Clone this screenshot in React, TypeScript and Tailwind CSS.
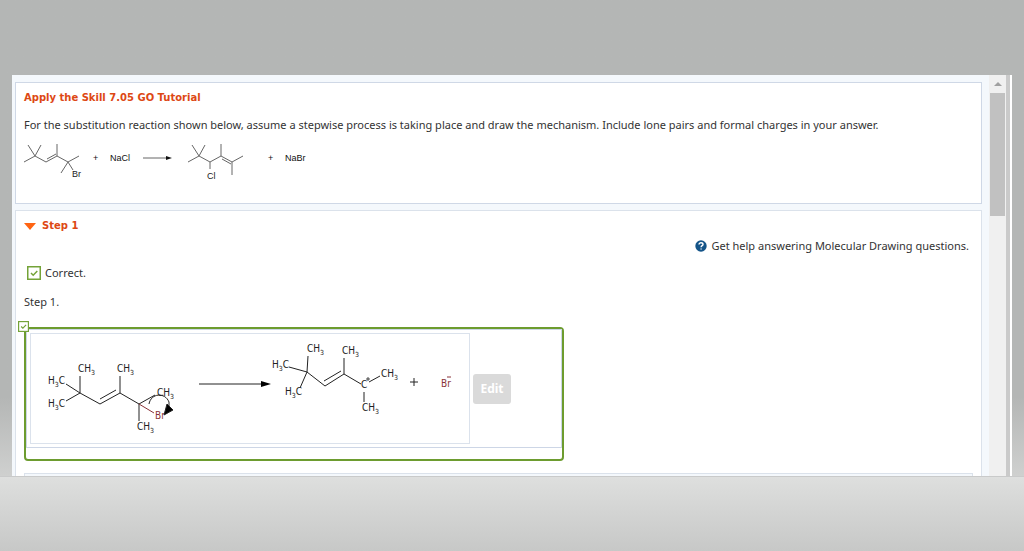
import React from 'react';

type AtomProps = { x: number; y: number; flip?: boolean };

function Methyl({ x, y, flip = false }: AtomProps) {
  return (
    <text x={x} y={y} stroke="none" fill="#222">
      {flip ? 'H' : 'CH'}
      <tspan dy="3" fontSize="7">3</tspan>
      {flip && <tspan dy="-3">C</tspan>}
    </text>
  );
}

function CheckBadge({ className }: { className: string }) {
  return (
    <svg viewBox="0 0 14 14" className={className} role="img" aria-label="Correct">
      <rect x="0.75" y="0.75" width="12.5" height="12.5" fill="#fff" stroke="#74a338" strokeWidth="1.5" />
      <path d="M4 7l2.2 2.2L10.3 5" fill="none" stroke="#74a338" strokeWidth="1.5" />
    </svg>
  );
}

function QuestionReaction() {
  return (
    <svg
      viewBox="0 0 300 44"
      className="block w-[300px] h-[44px] font-['Liberation_Sans',Arial,sans-serif]"
      fill="none"
      stroke="#666"
      strokeWidth="1"
      fontSize="9"
      role="img"
      aria-label="Alkyl bromide and sodium chloride react"
    >
      <path d="M0 19L11 13L22 19L33 13L44 19L55 13 M4 2L11 13L17 2 M33 13V1 M23 16L32 11 M44 19L37 30 M44 19L49 27" />
      <text x="48" y="34" stroke="none" fill="#222">Br</text>
      <text x="69" y="18" stroke="none" fill="#111">+</text>
      <text x="86" y="18" stroke="none" fill="#111">NaCl</text>
      <path d="M119 15H144" />
      <path d="M142 13L148 15L142 17Z" fill="#111" stroke="none" />
      <path d="M164 19L175 13L186 19L197 13L208 19L219 13 M168 2L175 13L181 2 M186 19V26 M197 13V1 M198 16L207 21 M208 19V32" />
      <text x="183" y="36" stroke="none" fill="#222">Cl</text>
      <text x="244" y="18" stroke="none" fill="#111">+</text>
      <text x="261" y="18" stroke="none" fill="#111">NaBr</text>
    </svg>
  );
}

function MechanismDrawing() {
  return (
    <svg
      viewBox="0 0 438 109"
      className="block w-[438px] h-[109px] font-['DejaVu_Sans_Condensed','DejaVu_Sans',sans-serif]"
      fill="none"
      stroke="#222"
      fontSize="10"
      role="img"
      aria-label="Mechanism drawing"
    >
      <path d="M35 50L49 59L35 67 M49 59V42 M49 59L69 70L89 59L108 70L124 61 M69 65L85 56 M89 59V42 M108 70V87" />
      <path d="M108 70L123 79" stroke="#8a3338" />
      <Methyl x={47} y={38} />
      <Methyl x={86} y={38} />
      <Methyl x={17} y={50} flip />
      <Methyl x={17} y={73} flip />
      <Methyl x={126} y={62} />
      <Methyl x={106} y={96} />
      <text x="124" y="85" stroke="none" fill="#8a3338">Br</text>
      <path d="M118 70C120 59 134 58 138 68Q139 72 136 76" />
      <path d="M136 70L142 76L133 81Z" fill="#000" />

      <path d="M168 50H233" />
      <path d="M230 47L240 50L230 53Z" fill="#000" stroke="none" />

      <path d="M258 33L276 38L277 22 M276 38L269 54 M276 38L294 52L313 40L330 50 M293 47L310 37 M313 40V24 M338 48L349 42 M333 58V68" />
      <Methyl x={276} y={18} />
      <Methyl x={311} y={20} />
      <Methyl x={241} y={34} flip />
      <Methyl x={254} y={61} flip />
      <Methyl x={350} y={43} />
      <Methyl x={331} y={77} />
      <text x="330" y="54" stroke="none" fill="#222">C</text>
      <path d="M335 45H339 M337 43V47" strokeWidth="0.8" />
      <path d="M379 48H387 M383 44V52" />
      <text x="410" y="53" stroke="none" fill="#8a3338">Br</text>
      <path d="M416 43H420" stroke="#8a3338" />
    </svg>
  );
}

function App() {
  return (
    <div className="flex h-screen flex-col bg-linear-to-b from-[#b4b6b5] from-72% to-[#d2d3d2] to-88% pt-[75px] font-['Noto_Sans',Verdana,sans-serif] text-[11px] leading-4 text-[#333]">
      <main className="mx-3 flex min-h-0 flex-1 overflow-hidden border-r-2 border-white bg-[#f4f8fc]">
        <div className="flex min-w-0 flex-1 flex-col gap-1.5 pt-[7px] pr-[7px] pl-[3px]">
          <section className="h-[122px] shrink-0 border border-[#cfd8e6] bg-white px-2 pt-[7px]">
            <h1 className="font-['DejaVu_Sans',Verdana,sans-serif] text-[10px] leading-4 font-bold text-[#dd4814]">
              Apply the Skill 7.05 GO Tutorial
            </h1>
            <p className="mt-[11px] mb-[10px]">
              For the substitution reaction shown below, assume a stepwise process is taking place and draw the mechanism. Include lone pairs and formal charges in your answer.
            </p>
            <QuestionReaction />
          </section>

          <section className="shrink-0 border border-[#dbe2eb] bg-white px-2 pt-[7px]">
            <button
              type="button"
              className="flex items-center gap-1.5 font-['DejaVu_Sans',Verdana,sans-serif] text-[10px] leading-4 font-bold text-[#dd4814]"
            >
              <svg viewBox="0 0 12 7" className="h-[7px] w-3" aria-hidden="true">
                <path d="M0 0H12L6 7Z" fill="#ff6412" />
              </svg>
              Step 1
            </button>
            <div className="mt-1 flex justify-end pr-1">
              <a href="#help" className="flex items-center gap-1">
                <svg viewBox="0 0 12 12" className="h-3 w-3" aria-hidden="true">
                  <circle cx="6" cy="6" r="5.7" fill="#145488" />
                  <path d="M4 4.6C4 2.1 8 2.3 8 4.4C8 5.7 6.1 5.7 6.1 7.2M6.1 8.4V9.6" fill="none" stroke="#fff" strokeWidth="1.4" />
                </svg>
                Get help answering Molecular Drawing questions.
              </a>
            </div>
            <p className="mt-[11px] flex items-center gap-1 pl-[3px]">
              <CheckBadge className="h-3.5 w-3.5" />
              Correct.
            </p>
            <p className="mt-[13px]">Step 1.</p>

            <div className="relative mt-[17px] h-[134px] w-[540px] rounded-[4px] border-2 border-[#6d9c2f]">
              <CheckBadge className="absolute -top-2 -left-2 h-[11px] w-[11px]" />
              <div className="flex items-center gap-[3px] border border-[#cdd6e6] p-[3px]">
                <div className="border border-[#dbe2ec] bg-white">
                  <MechanismDrawing />
                </div>
                <button type="button" disabled className="h-[30px] w-[38px] rounded-[3px] bg-[#dadada] text-xs font-bold text-white">
                  Edit
                </button>
              </div>
            </div>
            <div className="mt-3 h-10 border border-[#dbe2eb] bg-[#f4f8fc]" />
          </section>
        </div>

        <div className="flex w-[17px] shrink-0 flex-col items-center bg-[#f0f0f0]">
          <button type="button" aria-label="Scroll up" className="flex h-[18px] w-full items-center justify-center">
            <svg viewBox="0 0 8 4" className="h-1 w-2" aria-hidden="true">
              <path d="M0 4L4 0L8 4Z" fill="#a0a0a0" />
            </svg>
          </button>
          <div className="h-[123px] w-[15px] bg-[#c1c1c1]" />
        </div>
        <div className="w-1 shrink-0 bg-[#cacaca]" />
      </main>
      <footer className="h-[75px] shrink-0 border-t border-[#c9caca] bg-linear-to-b from-[#dedfde] to-[#c7c8c7]" />
    </div>
  );
}

export default App;
